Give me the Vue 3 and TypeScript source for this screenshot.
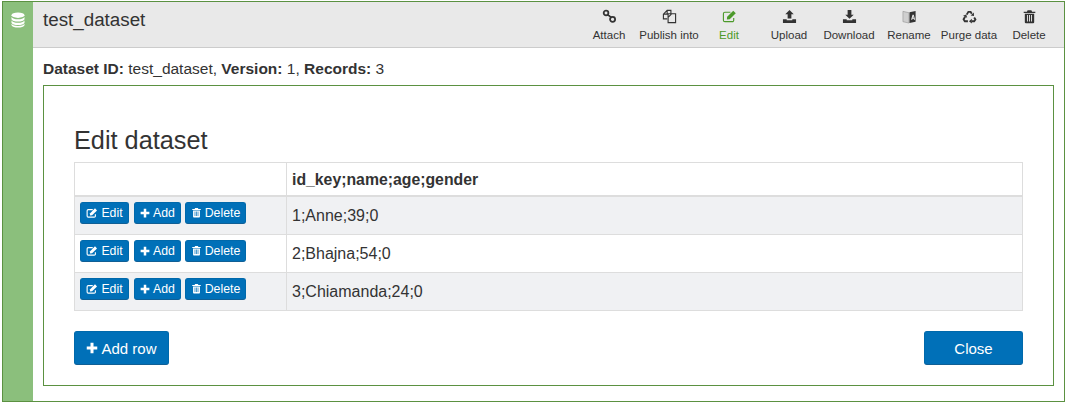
<script setup lang="ts">
interface Tool { label: string; active?: boolean; d: string; mode?: string; soft?: string; solid?: string }
const editBox = 'M9 3.500H3A1.500 1.500 0 0 0 1.500 5v7A1.500 1.500 0 0 0 3 13.500h8a1.500 1.500 0 0 0 1.500-1.500V9.500'
const pencil = 'M5.500 8.300L12 1.800 14.700 4.500 8.200 11 5.200 11.300z'
const trash = 'M3 5h10v9a1.200 1.200 0 0 1-1.200 1.200H4.200A1.200 1.200 0 0 1 3 14zM1.800 3h3.400l.8-1.700h4l.8 1.700h3.400v1.300H1.800zM5.300 6.500v6.700h1V6.500zm2.200 0v6.700h1V6.500zm2.200 0v6.700h1V6.500z'
const plus = 'M6 1h4v5h5v4h-5v5H6v-5H1V6h5z'
const tools: Tool[] = [
  { label: 'Attach', mode: 'line thick', d: 'M4.300 1.800a2.500 2.500 0 1 1 0 5a2.500 2.500 0 1 1 0-5zM11.300 8.300a2.700 2.700 0 1 1 0 5.400a2.700 2.700 0 1 1 0-5.400zM6 5.700l3.500 3.300' },
  { label: 'Publish into', mode: 'line', d: 'M5.500 10.500H1.500V5.500L5.500 1.500H9.500V5M5.500 1.500V5.500H1.500M6.500 5H14.500V14.500H6.500zM6.500 9L10 5.500' },
  { label: 'Edit', active: true, mode: 'line', d: editBox, solid: pencil },
  { label: 'Upload', d: 'M8 1l4.500 4.500H10V10H6V5.500H3.500zM1 11h4v1h6v-1h4v4H1z' },
  { label: 'Download', d: 'M6 1h4v5h2.500L8 10.500 3.500 6H6zM1 11h4v1h6v-1h4v4H1z' },
  { label: 'Rename', soft: 'M1 2.500L7.500 4v11L1 13.500z', d: 'M8 3.500L14.500 2v11.500L8 15zM9.700 11.500h1.200l.3-1.100h1.300l.3 1.100H14L12.500 6h-1.300zM11.500 9.300l.4-1.600.4 1.600z' },
  {
    label: 'Purge data',
    mode: 'line recycle',
    d: 'M5 6L6.800 3H9.200L10.400 5M13 9L14.300 11.200L13 13H10.500M6.300 13H3L1.700 11L3.300 8.200',
    solid: 'M12.600 3.800L12.800 7.500L9.200 6.900zM10.500 10.500L7.400 13L10.500 15.500zM1.100 7.200L4.500 5.900L5.500 9.200z',
  },
  { label: 'Delete', d: trash },
]
const rows = ['1;Anne;39;0', '2;Bhajna;54;0', '3;Chiamanda;24;0']
</script>

<template>
  <div class="panel">
    <aside class="side">
      <svg class="db" viewBox="0 0 14 16" width="14" height="16" aria-hidden="true">
        <ellipse cx="7" cy="3.200" rx="6.500" ry="2.700" />
        <path d="M.5 5c1 1.700 3.500 2.300 6.500 2.300s5.500-.6 6.500-2.300v2.200C13 9 10 9.500 7 9.500S1 9 .5 7.200z" />
        <path d="M.5 8.500c1 1.700 3.500 2.300 6.500 2.300s5.500-.6 6.500-2.300v2.200C13 12.500 10 13 7 13S1 12.500.5 10.700z" />
        <path d="M.5 11.800c1 1.700 3.500 2.200 6.500 2.200s5.500-.5 6.500-2.200V13.300C13 15 10 15.600 7 15.600S1 15 .5 13.300z" />
      </svg>
    </aside>
    <main class="content">
      <header class="top">
        <h1 class="title">test_dataset</h1>
        <nav class="tools">
          <a v-for="t in tools" :key="t.label" class="tool" :class="{ active: t.active }">
            <svg viewBox="0 0 16 16" width="15" height="15" aria-hidden="true" :class="t.mode">
              <path v-if="t.soft" class="soft" :d="t.soft" />
              <path :d="t.d" fill-rule="evenodd" />
              <path v-if="t.solid" class="solid" :d="t.solid" />
            </svg>
            <span>{{ t.label }}</span>
          </a>
        </nav>
      </header>
      <div class="body">
        <p class="meta"><b>Dataset ID:</b> test_dataset, <b>Version:</b> 1, <b>Records:</b> 3</p>
        <section class="modal">
          <h2 class="heading">Edit dataset</h2>
          <table class="grid">
            <thead>
              <tr><th class="actions"></th><th>id_key;name;age;gender</th></tr>
            </thead>
            <tbody>
              <tr v-for="(r, i) in rows" :key="r" :class="{ odd: i % 2 === 0 }">
                <td class="actions">
                  <div class="btns">
                    <button class="btn sm b-edit">
                      <svg class="line" viewBox="0 0 16 16" width="12" height="12" aria-hidden="true"><path :d="editBox" /><path class="solid" :d="pencil" /></svg>Edit
                    </button>
                    <button class="btn sm b-add">
                      <svg viewBox="0 0 16 16" width="10" height="10" aria-hidden="true"><path :d="plus" /></svg>Add
                    </button>
                    <button class="btn sm b-del">
                      <svg viewBox="0 0 16 16" width="11" height="11" aria-hidden="true"><path :d="trash" fill-rule="evenodd" /></svg>Delete
                    </button>
                  </div>
                </td>
                <td>{{ r }}</td>
              </tr>
            </tbody>
          </table>
          <footer class="foot">
            <button class="btn lg add">
              <svg viewBox="0 0 16 16" width="12" height="12" aria-hidden="true"><path :d="plus" /></svg>Add row
            </button>
            <button class="btn lg close">Close</button>
          </footer>
        </section>
      </div>
    </main>
  </div>
</template>

<style>
html, body { margin: 0; background: #fff; }
</style>

<style scoped>
.panel {
  box-sizing: border-box;
  display: flex;
  width: 1063px;
  height: 401px;
  margin: 1px 0 0 2px;
  border: 1px solid #5b9141;
  font-family: "Liberation Sans", Arial, sans-serif;
  color: #333;
  overflow: hidden;
}
.side {
  flex: 0 0 30px;
  background: #8bbf7c;
  display: flex;
  justify-content: center;
  padding-top: 10px;
  box-sizing: border-box;
}
.db { fill: #fff; }
.content { flex: 1; min-width: 0; }
.top {
  box-sizing: border-box;
  height: 46px;
  background: #e9e9e9;
  border-bottom: 1px solid #ccc;
  display: flex;
  justify-content: space-between;
  padding: 0 5px 0 10px;
}
.title { margin: 8px 0 0; font-size: 18.800px; font-weight: 400; line-height: 20px; }
.tools { display: flex; padding-top: 7px; }
.tool {
  width: 60px;
  display: flex;
  flex-direction: column;
  align-items: center;
  font-size: 11.500px;
  line-height: 13px;
  color: #333;
  white-space: nowrap;
}
.tool svg { fill: #333; margin-bottom: 5px; }
.tool svg.line { fill: none; stroke: #333; stroke-width: 1.200; }
.tool svg.thick { stroke-width: 1.900; }
.tool svg.recycle { stroke-width: 2; }
.tool svg .solid { fill: #333; stroke: none; }
.tool .soft { fill: #cfcfcf; stroke: #999; stroke-width: .7; }
.tool.active { color: #4c9a2a; }
.tool.active svg.line { stroke: #4c9a2a; }
.tool.active svg .solid { fill: #4c9a2a; }
.body { padding: 0 10px; }
.meta { margin: 0; padding-top: 12px; font-size: 15.500px; line-height: 18px; height: 25px; }
.modal {
  box-sizing: border-box;
  width: 1011px;
  height: 301px;
  border: 1px solid #5b9141;
  padding: 41px 30px 0;
}
.heading { margin: 0 0 9px; font-size: 25.300px; line-height: 26px; font-weight: 400; }
.grid {
  width: 100%;
  border-collapse: collapse;
  font-size: 16px;
  border: 1px solid #ddd;
}
.grid th, .grid td {
  border: 1px solid #ddd;
  padding: 1px 5px 0;
  text-align: left;
  height: 36px;
}
.grid th { height: 31px; border-bottom: 2px solid #ddd; font-weight: 700; font-size: 15.800px; }
.grid .actions { width: 201px; padding-top: 0; height: 37px; }
.grid th.actions { height: 31px; }
.odd { background: #f0f1f3; }
.btns { display: flex; margin-top: -6px; }
.btn {
  box-sizing: border-box;
  display: inline-flex;
  align-items: center;
  justify-content: center;
  border: 1px solid #0069ab;
  border-bottom-color: #105f95;
  background: #0070b8;
  color: #fff;
  border-radius: 3px;
  font-family: inherit;
  padding: 0;
}
.btn svg { fill: #fff; }
.btn svg.line { fill: none; stroke: #fff; stroke-width: 1.500; }
.btn svg .solid { fill: #fff; stroke: none; }
.sm { height: 22px; font-size: 12.300px; gap: 3px; }
.b-edit { width: 49px; margin-right: 5px; }
.b-add { width: 47px; margin-right: 4px; }
.b-del { width: 61px; }
.foot { display: flex; justify-content: space-between; margin-top: 20px; }
.lg { height: 34px; font-size: 15px; gap: 3px; }
.add { width: 95px; }
.close { width: 99px; }
</style>
